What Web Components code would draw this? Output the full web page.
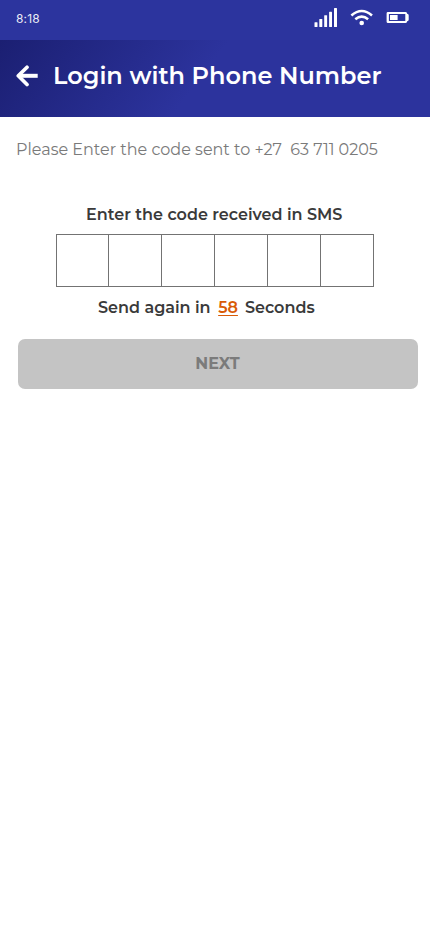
<!DOCTYPE html>
<html lang="en">
<head>
<meta charset="utf-8">
<title>Login with Phone Number</title>
<style>
html,body{margin:0;padding:0;background:#fff}
body{font-family:Montserrat,Inter,"Noto Sans",sans-serif}
</style>
</head>
<body>
<login-page></login-page>
<script>
class TextLine extends HTMLElement{
  constructor(){
    super();
    this.attachShadow({mode:'open'}).innerHTML=`<style>
      :host{display:block;flex:none;white-space:pre;line-height:20px}
    </style><slot></slot>`;
  }
}
customElements.define('text-line',TextLine);

class StatusBar extends HTMLElement{
  constructor(){
    super();
    this.attachShadow({mode:'open'}).innerHTML=`<style>
      :host{display:flex;height:40px;box-sizing:border-box;background:#2c349e;color:#fff;padding:0 20px 0 16px;justify-content:space-between}
      .time{font:400 12px/16px Inter,sans-serif;letter-spacing:.2px;padding-top:11px;opacity:.9}
      .icons{display:flex;padding-top:6px}
      svg{display:block}
    </style>
    <div class="time"><slot></slot></div>
    <div class="icons">
      <svg width="96" height="24" viewBox="0 0 96 24" fill="#fff">
        <rect x="0.5" y="16.2" width="3" height="4.8" rx=".5"/><rect x="5.3" y="13" width="3" height="8" rx=".5"/><rect x="10.2" y="9.2" width="2.9" height="11.8" rx=".5"/><rect x="15.1" y="5.8" width="2.9" height="15.2" rx=".5"/><rect x="20" y="2.1" width="3" height="18.9" rx=".5"/>
        <g fill="none" stroke="#fff" stroke-width="2.6"><path d="M37.4 9.4Q47.7 0.6 58 9.4"/><path d="M41.3 13.2Q47.7 7.9 54.1 13.2"/></g>
        <circle cx="47.7" cy="17" r="2.3"/>
        <path fill-rule="evenodd" d="M74 6H91.6Q93.1 6 93.2 7.8Q94.7 8 94.7 9.3V13.7Q94.7 15 93.2 15.2Q93.1 17 91.6 17H74Q72.6 17 72.6 15.7V7.3Q72.6 6 74 6ZM74.9 8V15H91.3V8Z"/>
        <rect x="76" y="9" width="7.6" height="5"/>
      </svg>
    </div>`;
  }
}
customElements.define('status-bar',StatusBar);

class AppHeader extends HTMLElement{
  constructor(){
    super();
    this.attachShadow({mode:'open'}).innerHTML=`<style>
      :host{display:flex;align-items:center;height:77px;box-sizing:border-box;padding:0 0 6px 16px;color:#fff;background:linear-gradient(127deg,#1b1f72 0%,#2c339d 47%)}
      svg{display:block;flex:none;margin-right:15px}
      h1{margin:0;font-size:24px;font-weight:600;line-height:30px;white-space:nowrap}
    </style>
    <svg width="22" height="22" viewBox="0 0 22 22" fill="none" stroke="#fff" stroke-width="4"><path d="M21.7 10.8H4"/><path d="M11 2.2L2.3 10.8L11 19.5" stroke-width="3.7" stroke-linejoin="round" stroke-linecap="round"/></svg>
    <h1><slot></slot></h1>`;
  }
}
customElements.define('app-header',AppHeader);

class CodeInput extends HTMLElement{
  constructor(){
    super();
    this.attachShadow({mode:'open'}).innerHTML=`<style>
      :host{display:grid;grid-template-columns:52px repeat(5,53px);width:318px;height:53px;box-sizing:border-box;border:1px solid #737373;border-right:0}
      i{border-right:1px solid #737373}
    </style>`+'<i></i>'.repeat(6);
  }
}
customElements.define('code-input',CodeInput);

class NextButton extends HTMLElement{
  constructor(){
    super();
    this.attachShadow({mode:'open'}).innerHTML=`<style>
      :host{display:flex;justify-content:center;align-items:center;height:50px;box-sizing:border-box;padding-right:1px;border-radius:7px;background:#c4c4c4;color:#7b7b7b;font-size:16px;font-weight:700}
    </style><slot></slot>`;
  }
}
customElements.define('next-button',NextButton);

class LoginPage extends HTMLElement{
  constructor(){
    super();
    this.attachShadow({mode:'open'}).innerHTML=`<style>
      :host{display:block;width:430px;height:932px;overflow:hidden;background:#fff}
      main{display:flex;flex-direction:column;font-size:16px}
      .intro{margin:23px 0 0 16px;font-weight:400;color:#7a7a7a}
      .label{margin:45px 0 0 86px;font-weight:600;color:#3a3a3a}
      code-input{margin:9px 0 0 56px}
      .resend{display:flex;margin:11px 0 0 98px;font-weight:600;color:#3a3a3a}
      .count{margin:0 7px 0 7.6px;color:#d95b07;text-decoration:underline;text-decoration-thickness:1px;text-underline-offset:2px}
      next-button{margin:21px 12px 0 18px}
    </style>
    <status-bar>8:18</status-bar>
    <app-header>Login with Phone Number</app-header>
    <main>
      <text-line class="intro">Please Enter the code sent to +27  63 711 0205</text-line>
      <text-line class="label">Enter the code received in SMS</text-line>
      <code-input></code-input>
      <div class="resend"><text-line>Send again in</text-line><text-line class="count">58</text-line><text-line>Seconds</text-line></div>
      <next-button><text-line>NEXT</text-line></next-button>
    </main>`;
  }
}
customElements.define('login-page',LoginPage);
</script>
</body>
</html>
